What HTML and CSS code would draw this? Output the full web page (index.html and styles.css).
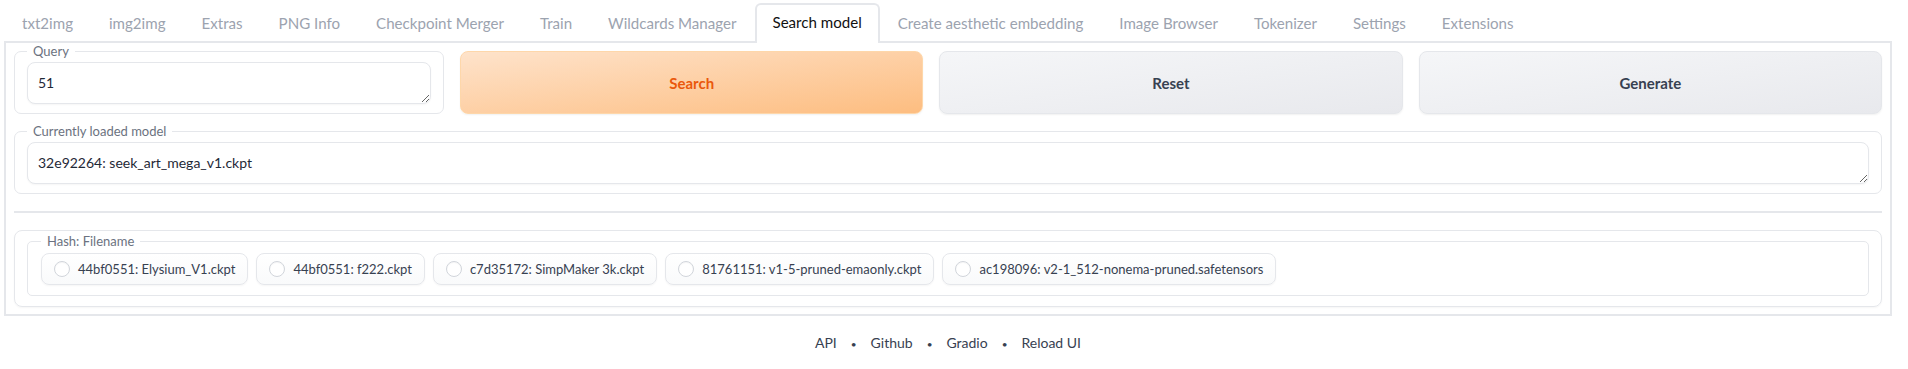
FILE: index.html
```html
<!DOCTYPE html>
<html>
  <head>
    <meta charset="utf-8" />
    <title>Stable Diffusion</title>
    <link rel="stylesheet" href="styles.css">
  </head>

  <body>
    <div class="app">
      <div class="tab-nav">
        <button class="tab">txt2img</button>
        <button class="tab">img2img</button>
        <button class="tab">Extras</button>
        <button class="tab">PNG Info</button>
        <button class="tab">Checkpoint Merger</button>
        <button class="tab">Train</button>
        <button class="tab">Wildcards Manager</button>
        <button class="tab selected">Search model</button>
        <button class="tab">Create aesthetic embedding</button>
        <button class="tab">Image Browser</button>
        <button class="tab">Tokenizer</button>
        <button class="tab">Settings</button>
        <button class="tab">Extensions</button>
      </div>

      <div class="tabitem">
        <div class="top-row">
          <div class="block">
            <span class="block-label">Query</span>
            <textarea class="text" rows="1">51</textarea>
          </div>
          <button class="btn primary">Search</button>
          <button class="btn secondary">Reset</button>
          <button class="btn secondary">Generate</button>
        </div>

        <div class="block">
          <span class="block-label">Currently loaded model</span>
          <textarea class="text" rows="1">32e92264: seek_art_mega_v1.ckpt</textarea>
        </div>

        <div class="divider"></div>

        <div class="box">
          <div class="block radio-block">
            <span class="block-label">Hash: Filename</span>
            <div class="radios">
              <label class="radio"><span class="dot"></span>44bf0551: Elysium_V1.ckpt</label>
              <label class="radio"><span class="dot"></span>44bf0551: f222.ckpt</label>
              <label class="radio"><span class="dot"></span>c7d35172: SimpMaker 3k.ckpt</label>
              <label class="radio"><span class="dot"></span>81761151: v1-5-pruned-emaonly.ckpt</label>
              <label class="radio"><span class="dot"></span>ac198096: v2-1_512-nonema-pruned.safetensors</label>
            </div>
          </div>
        </div>
      </div>

      <div class="footer">
        <a>API</a><span class="sep">•</span><a>Github</a><span class="sep">•</span><a>Gradio</a><span class="sep">•</span><a>Reload UI</a>
      </div>
    </div>
  </body>
</html>
```

FILE: styles.css
```css
* {
  box-sizing: border-box;
}

body {
  margin: 0;
  background: #fff;
  font-family: Lato, "Liberation Sans", sans-serif;
  color: #374151;
}

.app {
  padding: 3px 16px 0 4px;
}

/* tabs */
.tab-nav {
  display: flex;
  border-bottom: 2px solid #e5e7eb;
}

.tab {
  font: inherit;
  font-size: 15.1px;
  line-height: 20px;
  color: #9ca3af;
  background: none;
  border: 2px solid transparent;
  border-bottom: none;
  padding: 7px 16px 9px;
  margin-bottom: -2px;
  border-radius: 6px 6px 0 0;
}

.tab.selected {
  color: #111;
  background: #fff;
  border-color: #e5e7eb;
  padding-bottom: 11px;
}

.tabitem {
  border: 2px solid #e5e7eb;
  border-top: none;
  padding: 8px 8px 7px;
  display: flex;
  flex-direction: column;
  gap: 17px;
}

/* first row */
.top-row {
  display: grid;
  grid-template-columns: 430px repeat(3, 1fr);
  gap: 16px;
}

.block {
  position: relative;
  border: 1px solid #e5e7eb;
  border-radius: 7px;
  padding: 10px 12px 9px;
}

.block-label {
  position: absolute;
  top: -9px;
  left: 12px;
  padding: 0 6px;
  background: #fff;
  font-size: 13px;
  line-height: 17px;
  color: #6b7280;
}

.text {
  display: block;
  width: 100%;
  height: 42px;
  font: inherit;
  font-size: 14px;
  line-height: 20px;
  color: #1f2937;
  padding: 10px 10px;
  border: 1px solid #e5e7eb;
  border-radius: 8px;
  box-shadow: 0 1px 2px rgba(0, 0, 0, 0.04);
  outline: none;
}

.btn {
  font: inherit;
  font-size: 15px;
  font-weight: 700;
  border-radius: 8px;
  box-shadow: 0 1px 2px rgba(0, 0, 0, 0.06);
}

.primary {
  color: #ea580c;
  border: 1px solid #fed7aa;
  background: linear-gradient(to bottom right, #fee3cb, #fdbd80);
}

.secondary {
  color: #374151;
  border: 1px solid #e5e7eb;
  background: linear-gradient(to bottom right, #f5f6f8, #e8e9ed);
}

.divider {
  border-top: 2px solid #e5e7eb;
}

/* radio group */
.box {
  border: 1px solid #e5e7eb;
  border-radius: 8px;
  padding: 10px 12px 10px;
  box-shadow: 0 1px 2px rgba(0, 0, 0, 0.04);
}

.radio-block {
  padding: 11px 13px 10px;
  border-radius: 5px;
}

.radio-block .block-label {
  top: -9px;
  left: 13px;
}

.radios {
  display: flex;
  gap: 8px;
}

.radio {
  display: flex;
  align-items: center;
  gap: 8px;
  height: 32px;
  padding: 0 12px;
  font-size: 13px;
  color: #374151;
  border: 1px solid #e5e7eb;
  border-radius: 8px;
  background: linear-gradient(to bottom, #fff, #f9fafb);
  box-shadow: 0 1px 2px rgba(0, 0, 0, 0.04);
}

.dot {
  width: 16px;
  height: 16px;
  border-radius: 50%;
  border: 1px solid #d1d5db;
  background: #fff;
  box-shadow: inset 0 1px 1px rgba(0, 0, 0, 0.04);
}

/* footer */
.footer {
  text-align: center;
  margin-top: 17px;
  font-size: 14px;
  line-height: 20px;
  color: #374151;
}

.sep {
  margin: 0 14px;
  font-size: 10px;
}
```
